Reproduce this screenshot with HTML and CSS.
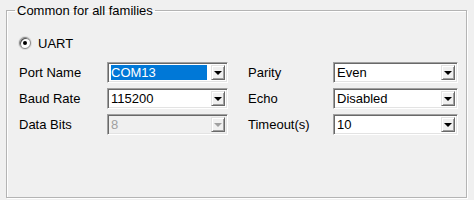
FILE: index.html
```html
<!DOCTYPE html>
<html lang="en">
<head>
  <meta charset="UTF-8">
  <title>Serial settings</title>
  <link rel="stylesheet" href="styles.css">
</head>
<body>
  <fieldset class="group">
    <legend class="group-title">Common for all families</legend>
    <label class="radio-row">
      <span class="radio"><span class="radio-dot"></span></span>
      <span>UART</span>
    </label>
    <div class="form-grid">
      <span class="lbl">Port Name</span>
      <div class="combo">
        <span class="combo-text"><span class="selected">COM13</span></span>
        <span class="combo-btn"><span class="arrow"></span></span>
      </div>
      <span class="lbl lbl-right">Parity</span>
      <div class="combo">
        <span class="combo-text">Even</span>
        <span class="combo-btn"><span class="arrow"></span></span>
      </div>

      <span class="lbl">Baud Rate</span>
      <div class="combo">
        <span class="combo-text">115200</span>
        <span class="combo-btn"><span class="arrow"></span></span>
      </div>
      <span class="lbl lbl-right">Echo</span>
      <div class="combo">
        <span class="combo-text">Disabled</span>
        <span class="combo-btn"><span class="arrow"></span></span>
      </div>

      <span class="lbl">Data Bits</span>
      <div class="combo disabled">
        <span class="combo-text">8</span>
        <span class="combo-btn"><span class="arrow"></span></span>
      </div>
      <span class="lbl lbl-right">Timeout(s)</span>
      <div class="combo">
        <span class="combo-text">10</span>
        <span class="combo-btn"><span class="arrow"></span></span>
      </div>
    </div>
  </fieldset>
</body>
</html>
```

FILE: styles.css
```css
* {
  box-sizing: border-box;
}
body {
  margin: 0;
  background: #f0f0f0;
  font-family: "Liberation Sans", Arial, sans-serif;
  font-size: 13px;
  color: #000;
  width: 474px;
  height: 200px;
  overflow: hidden;
}
.group {
  margin: 3px 7px 0 6px;
  height: 195px;
  padding: 8px 0 0 12px;
  border: 1px solid #b4b4b4;
  box-shadow: inset 1px 1px 0 #fff, 1px 1px 0 #fff;
}
.group-title {
  margin-left: -4px;
  padding: 0 2px 0 2px;
  line-height: 15px;
}
.radio-row {
  display: flex;
  align-items: center;
  gap: 7px;
  height: 20px;
  margin-top: 7px;
}
.radio {
  width: 12px;
  height: 12px;
  border-radius: 50%;
  background: #fff;
  border: 1px solid #8a8a8a;
  box-shadow: inset 1px 1px 0 #555, 0 0 0 1px #dcdcdc;
  display: flex;
  justify-content: center;
  align-items: center;
}
.radio-dot {
  width: 4px;
  height: 4px;
  border-radius: 50%;
  background: #000;
}
.form-grid {
  display: grid;
  grid-template-columns: 88px 121px 105px 125px;
  row-gap: 5px;
  margin-top: 9px;
  align-items: center;
}
.lbl {
  line-height: 21px;
}
.lbl-right {
  margin-left: 20px;
}
.combo {
  display: flex;
  height: 21px;
  background: #fff;
  border: 1px solid;
  border-color: #a0a0a0 #fff #fff #a0a0a0;
  box-shadow: inset 1px 1px 0 #696969, inset -1px -1px 0 #e3e3e3;
  padding: 2px;
}
.combo-text {
  flex: 1;
  line-height: 15px;
  padding-left: 1px;
  white-space: nowrap;
}
.selected {
  display: block;
  background: #0078d7;
  color: #fff;
  margin-right: 4px;
  height: 15px;
}
.combo-btn {
  width: 14px;
  background: #f0f0f0;
  border: 1px solid;
  border-color: #e3e3e3 #696969 #696969 #e3e3e3;
  box-shadow: inset 1px 1px 0 #fff, inset -1px -1px 0 #a0a0a0;
  display: flex;
  justify-content: center;
  align-items: center;
}
.arrow {
  width: 0;
  height: 0;
  border-left: 4px solid transparent;
  border-right: 4px solid transparent;
  border-top: 4px solid #000;
  margin-top: 1px;
}
.combo.disabled {
  background: #f0f0f0;
  color: #a0a0a0;
}
.combo.disabled .arrow {
  border-top-color: #a0a0a0;
}
```
